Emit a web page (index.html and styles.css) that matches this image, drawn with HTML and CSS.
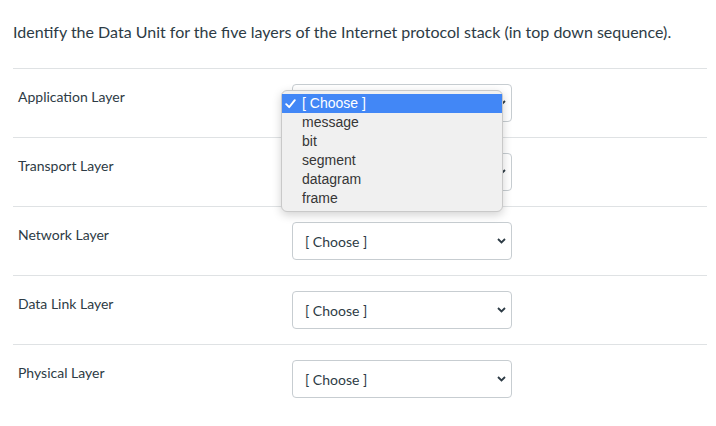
FILE: index.html
```
<!DOCTYPE html>
<html lang="en">
<head>
<meta charset="utf-8">
<link rel="stylesheet" href="styles.css">
</head>
<body>
<div class="page">
  <p class="question">Identify the Data Unit for the five layers of the Internet protocol stack (in top down sequence).</p>
  <div class="rows">
    <div class="row">
      <div class="label">Application Layer</div>
      <div class="field">
        <div class="select"><span>[ Choose ]</span><svg class="chev" width="9" height="6" viewBox="0 0 9 6"><path d="M1 1 L4.5 4.5 L8 1" fill="none" stroke="#2d3b45" stroke-width="1.8"/></svg></div>
        <div class="popup">
          <div class="opt selected"><svg class="tick" width="11" height="10" viewBox="0 0 11 10"><path d="M1.2 5.2 L4.2 8.2 L9.8 1.2" fill="none" stroke="#ffffff" stroke-width="1.9" stroke-linecap="round" stroke-linejoin="round"/></svg>[ Choose ]</div>
          <div class="opt">message</div>
          <div class="opt">bit</div>
          <div class="opt">segment</div>
          <div class="opt">datagram</div>
          <div class="opt">frame</div>
        </div>
      </div>
    </div>
    <div class="row">
      <div class="label">Transport Layer</div>
      <div class="field">
        <div class="select"><span>[ Choose ]</span><svg class="chev" width="9" height="6" viewBox="0 0 9 6"><path d="M1 1 L4.5 4.5 L8 1" fill="none" stroke="#2d3b45" stroke-width="1.8"/></svg></div>
      </div>
    </div>
    <div class="row">
      <div class="label">Network Layer</div>
      <div class="field">
        <div class="select"><span>[ Choose ]</span><svg class="chev" width="9" height="6" viewBox="0 0 9 6"><path d="M1 1 L4.5 4.5 L8 1" fill="none" stroke="#2d3b45" stroke-width="1.8"/></svg></div>
      </div>
    </div>
    <div class="row">
      <div class="label">Data Link Layer</div>
      <div class="field">
        <div class="select"><span>[ Choose ]</span><svg class="chev" width="9" height="6" viewBox="0 0 9 6"><path d="M1 1 L4.5 4.5 L8 1" fill="none" stroke="#2d3b45" stroke-width="1.8"/></svg></div>
      </div>
    </div>
    <div class="row">
      <div class="label">Physical Layer</div>
      <div class="field">
        <div class="select"><span>[ Choose ]</span><svg class="chev" width="9" height="6" viewBox="0 0 9 6"><path d="M1 1 L4.5 4.5 L8 1" fill="none" stroke="#2d3b45" stroke-width="1.8"/></svg></div>
      </div>
    </div>
  </div>
</div>
</body>
</html>
```
FILE: styles.css
```
html, body {
  margin: 0;
  padding: 0;
  background: #ffffff;
}
.page {
  padding: 20px 9px 0 13px;
  font-family: Lato, "Open Sans", sans-serif;
  color: #2d3b45;
}
.question {
  margin: 0 0 24px 0;
  font-size: 16px;
  line-height: 24px;
}
.row {
  border-top: 1px solid #dfe2e4;
  display: grid;
  grid-template-columns: 279px 220px;
  padding: 15px 0;
}
.label {
  font-size: 14px;
  line-height: 21px;
  padding: 2px 0 0 5px;
}
.field {
  position: relative;
}
.select {
  box-sizing: border-box;
  height: 38px;
  border: 1px solid #c7cdd1;
  border-radius: 4px;
  display: flex;
  align-items: center;
  justify-content: space-between;
  padding: 1px 5px 0 12px;
  font-size: 14px;
  background: #fff;
}
.chev {
  margin-top: -1px;
}
.popup {
  position: absolute;
  left: -11px;
  top: 6px;
  width: 222px;
  box-sizing: border-box;
  padding: 3px 0 3px 0;
  background: #f0f0f0;
  border: 1px solid #c9c9c9;
  border-radius: 6px;
  box-shadow: 0 3px 10px rgba(0,0,0,0.18);
  font-family: "Liberation Sans", Arial, sans-serif;
  font-size: 14px;
  color: #363636;
  z-index: 2;
}
.opt {
  height: 19px;
  line-height: 19px;
  padding-left: 20px;
  position: relative;
}
.opt.selected {
  background: #4287f6;
  color: #ffffff;
}
.tick {
  position: absolute;
  left: 3px;
  top: 5px;
}
```
